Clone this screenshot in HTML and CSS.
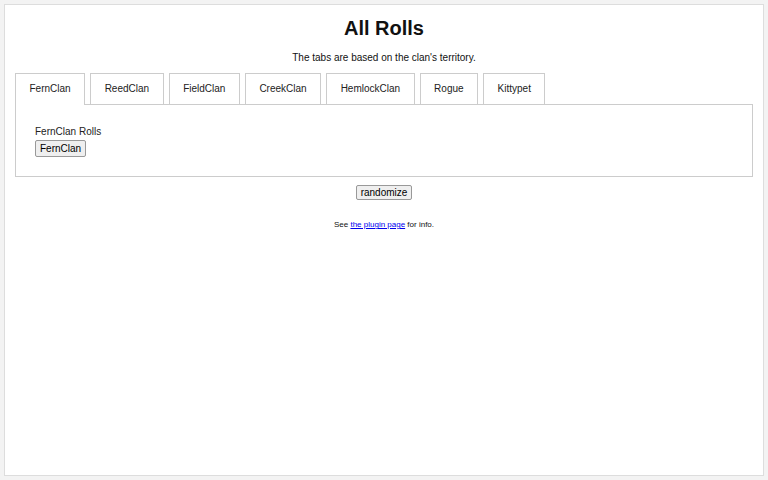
FILE: index.html
```html
<!DOCTYPE html>
<html lang="en">
<head>
	<meta charset="UTF-8">
	<title>All Rolls</title>
<link rel="stylesheet" href="styles.css">
</head>
<body>
	<div class="page">
		<h1 class="title">All Rolls</h1>
		<p class="intro">The tabs are based on the clan's territory.</p>

		<ul class="tabs">
			<li class="active">FernClan</li>
			<li>ReedClan</li>
			<li>FieldClan</li>
			<li>CreekClan</li>
			<li>HemlockClan</li>
			<li>Rogue</li>
			<li>Kittypet</li>
		</ul>
		<div class="panel">
			<div class="label">FernClan Rolls</div>
			<button class="btn">FernClan</button>
		</div>

		<div class="actions"><button class="btn">randomize</button></div>
		<p class="note">See <a href="#">the plugin page</a> for info.</p>
	</div>
</body>
</html>
```

FILE: styles.css
```css
*{margin: 0; padding: 0;}
li{list-style: none;}
html, body{height: 100%;}
body{
	background: #f3f3f3;
	font-family: "Liberation Sans", Arial, sans-serif;
	color: #111;
	padding: 4px 4px;
	box-sizing: border-box;
}
.page{
	height: 100%;
	box-sizing: border-box;
	background: #fff;
	border: 1px solid #ddd;
	padding: 0 10px;
}
.title{
	font-size: 20px;
	font-weight: bold;
	text-align: center;
	padding-top: 12px;
	line-height: 23px;
}
.intro{
	font-size: 10px;
	text-align: center;
	margin-top: 12px;
	line-height: 12px;
}
.tabs{
	display: flex;
	gap: 5px;
	margin-top: 9px;
	position: relative;
	z-index: 1;
}
.tabs li{
	font-size: 10px;
	line-height: 12px;
	padding: 9px 13.5px 9px;
	border: 1px solid #ccc;
	border-bottom: none;
	height: 12px;
	background: #fff;
	color: #222;
}
.tabs li.active{
	height: 13px;
	margin-bottom: -1px;
}
.panel{
	border: 1px solid #ccc;
	padding: 21px 19px 19px;
	height: 31px;
}
.label{
	font-size: 10px;
	line-height: 12px;
	color: #222;
}
.btn{
	font: 10px "Liberation Sans", Arial, sans-serif;
	padding: 2px 4px;
	border: 1px solid #999;
	border-radius: 2px;
	background: #efefef;
	color: #000;
}
.actions{
	text-align: center;
	margin-top: 5px;
}
.actions .btn{
	padding: 1px 4px;
}
.note{
	font-size: 8px;
	text-align: center;
	margin-top: 20px;
}
.note a{
	color: #00e;
}
```
